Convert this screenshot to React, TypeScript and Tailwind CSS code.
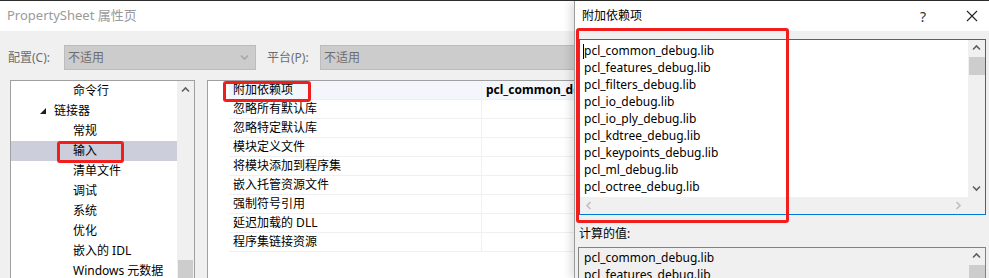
import React from "react";

const font = "font-['Segoe_UI','Noto_Sans','Noto_Sans_CJK_SC',sans-serif]";

function Chevron({ dir, color = "#606060" }: { dir: "up" | "down" | "left" | "right"; color?: string }) {
  const d = {
    up: "M1 5.5 L4.5 2 L8 5.5",
    down: "M1 2.5 L4.5 6 L8 2.5",
    left: "M5.5 1 L2 4.5 L5.5 8",
    right: "M2.5 1 L6 4.5 L2.5 8",
  }[dir];
  return (
    <svg width="9" height="9" viewBox="0 0 9 9">
      <path d={d} fill="none" stroke={color} strokeWidth="1.6" />
    </svg>
  );
}

const treeItems: { label: string; level: number; selected?: boolean }[] = [
  { label: "命令行", level: 2 },
  { label: "链接器", level: 1 },
  { label: "常规", level: 2 },
  { label: "输入", level: 2, selected: true },
  { label: "清单文件", level: 2 },
  { label: "调试", level: 2 },
  { label: "系统", level: 2 },
  { label: "优化", level: 2 },
  { label: "嵌入的 IDL", level: 2 },
  { label: "Windows 元数据", level: 2 },
];

const gridRows = [
  "附加依赖项",
  "忽略所有默认库",
  "忽略特定默认库",
  "模块定义文件",
  "将模块添加到程序集",
  "嵌入托管资源文件",
  "强制符号引用",
  "延迟加载的 DLL",
  "程序集链接资源",
];

const libs = [
  "pcl_common_debug.lib",
  "pcl_features_debug.lib",
  "pcl_filters_debug.lib",
  "pcl_io_debug.lib",
  "pcl_io_ply_debug.lib",
  "pcl_kdtree_debug.lib",
  "pcl_keypoints_debug.lib",
  "pcl_ml_debug.lib",
  "pcl_octree_debug.lib",
];

function Combo({ width, chevron = true }: { width: string; chevron?: boolean }) {
  return (
    <div className={`flex h-[25px] shrink-0 ${width} items-center justify-between border border-[#bcbcbc] bg-[#cccccc] pl-[3px] pr-[6px] text-[#6d6d6d]`}>
      <span>不适用</span>
      {chevron && <Chevron dir="down" color="#a8a8a8" />}
    </div>
  );
}

export default function App() {
  return (
    <div className={`relative flex h-[278px] w-[989px] flex-col overflow-hidden bg-[#f0f0f0] text-[12px] text-black ${font}`}>
      <div className="h-px shrink-0 bg-[#2d2d2d]" />
      <div className="flex h-[277px]">
        {/* background property sheet */}
        <div className="flex w-[574px] shrink-0 flex-col overflow-hidden">
          <div className="flex h-[30px] shrink-0 items-center bg-white pl-[7px] text-[13px] text-[#9a9a9a]">PropertySheet 属性页</div>

          <div className="mt-[14px] flex h-[25px] shrink-0 items-center">
            <span className="ml-[8px] w-[56px] shrink-0 text-[#6d6d6d]">配置(C):</span>
            <Combo width="w-[192px]" />
            <span className="ml-[11px] w-[53px] shrink-0 text-[#6d6d6d]">平台(P):</span>
            <Combo width="w-[300px]" chevron={false} />
          </div>

          <div className="mt-[10px] flex min-h-0 flex-1">
            {/* tree */}
            <div className="ml-[10px] flex w-[185px] shrink-0 border-l border-r border-t border-[#a0a0a0] bg-white">
              <div className="flex-1">
                {treeItems.map((it) => (
                  <div
                    key={it.label}
                    className={`flex h-[20px] items-center ${it.selected ? "bg-[#cccedb]" : ""}`}
                  >
                    {it.level === 1 ? (
                      <>
                        <span className="ml-[29px] mr-[8px] flex w-[6px] items-center">
                          <svg width="6" height="6" viewBox="0 0 6 6">
                            <polygon points="6,0 6,6 0,6" fill="#1e1e1e" />
                          </svg>
                        </span>
                        <span>{it.label}</span>
                      </>
                    ) : (
                      <span className="ml-[62px] whitespace-nowrap">{it.label}</span>
                    )}
                  </div>
                ))}
              </div>
              <div className="flex w-[17px] flex-col items-center bg-[#f0f0f0]">
                <div className="flex h-[20px] items-center">
                  <Chevron dir="up" />
                </div>
                <div className="mt-[161px] h-[20px] w-[15px] bg-[#cdcdcd]" />
              </div>
            </div>

            {/* property grid */}
            <div className="ml-[12px] flex-1 overflow-hidden border-l border-t border-[#a0a0a0] bg-white">
              {gridRows.map((name, i) => (
                <div key={name} className="flex h-[19px]">
                  <div className="w-[21px] shrink-0" />
                  <div
                    className={`flex w-[252px] shrink-0 items-center border-b border-[#eff0f4] pl-[4px] ${i === 0 ? "bg-[#f3f6fb]" : ""}`}
                  >
                    {name}
                  </div>
                  <div
                    className={`flex flex-1 items-center overflow-hidden whitespace-nowrap border-b border-l border-[#eff0f4] pl-[4px] font-bold ${i === 0 ? "bg-[#f3f6fb]" : ""}`}
                  >
                    {i === 0 ? "pcl_common_debug.lib" : ""}
                  </div>
                </div>
              ))}
            </div>
          </div>
        </div>

        {/* foreground dialog */}
        <div className="flex w-[415px] shrink-0 flex-col border-l border-[#9c9c9c] bg-[#f0f0f0] shadow-[-4px_0_8px_rgba(0,0,0,0.12)]">
          <div className="flex h-[30px] shrink-0 items-center bg-white pl-[7px]">
            <span className="flex-1">附加依赖项</span>
            <span className="w-[14px] text-[14px] text-[#333]">?</span>
            <span className="ml-[32px] mr-[11px] flex w-[12px] items-center">
              <svg width="12" height="12" viewBox="0 0 12 12">
                <path d="M1 1 L11 11 M11 1 L1 11" stroke="#222" strokeWidth="1.1" />
              </svg>
            </span>
          </div>

          {/* editable list */}
          <div className="ml-[4px] mt-[8px] grid h-[176px] w-[407px] shrink-0 grid-cols-[1fr_17px] grid-rows-[1fr_17px] border border-[#0078d7]">
            <div className="relative bg-white pl-[4px] pt-[2px]">
              <div className="absolute left-[3px] top-[4px] h-[15px] w-px bg-black" />
              {libs.map((l) => (
                <div key={l} className="h-[17px] leading-[17px]">
                  {l}
                </div>
              ))}
            </div>
            <div className="flex flex-col items-center bg-[#f0f0f0]">
              <div className="flex h-[17px] items-center">
                <Chevron dir="up" />
              </div>
              <div className="h-[18px] w-[16px] bg-[#cdcdcd]" />
              <div className="flex-1" />
              <div className="flex h-[17px] items-center">
                <Chevron dir="down" />
              </div>
            </div>
            <div className="flex items-center justify-between bg-[#f0f0f0] px-[5px]">
              <Chevron dir="left" color="#bfbfbf" />
              <Chevron dir="right" color="#bfbfbf" />
            </div>
            <div className="bg-[#f0f0f0]" />
          </div>

          <div className="ml-[4px] mt-[11px] h-[16px] shrink-0 leading-[16px]">计算的值:</div>

          <div className="ml-[3px] mt-[5px] flex min-h-0 w-[408px] flex-1 overflow-hidden border-l border-r border-t border-[#828282]">
            <div className="flex-1 pl-[5px] pt-[1px]">
              {libs.slice(0, 2).map((l) => (
                <div key={l} className="h-[17px] leading-[17px]">
                  {l}
                </div>
              ))}
            </div>
            <div className="flex w-[17px] flex-col items-center">
              <div className="flex h-[17px] shrink-0 items-center">
                <Chevron dir="up" />
              </div>
              <div className="h-[20px] w-[16px] shrink-0 bg-[#cdcdcd]" />
            </div>
          </div>
        </div>
      </div>

      {/* highlight boxes */}
      <div className="absolute left-[57px] top-[141px] h-[22px] w-[67px] rounded-[3px] border-[3px] border-[#f21d1d]" />
      <div className="absolute left-[223px] top-[81px] h-[21px] w-[88px] rounded-[3px] border-[3px] border-[#f21d1d]" />
      <div className="absolute left-[576px] top-[28px] h-[195px] w-[213px] rounded-[3px] border-[3px] border-[#f21d1d]" />
    </div>
  );
}
